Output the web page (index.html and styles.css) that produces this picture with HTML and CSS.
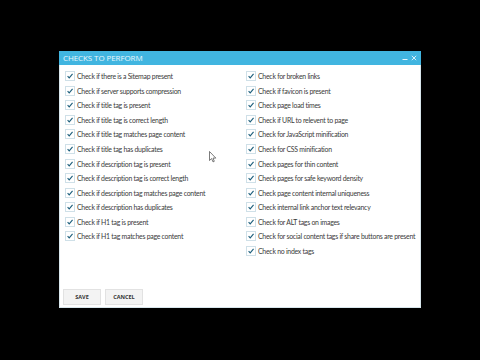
FILE: index.html
```html
<!DOCTYPE html>
<html>
<head>
<meta charset="utf-8">
<link rel="stylesheet" href="styles.css">
</head>
<body>
<div class="dialog">
  <div class="titlebar">
    <span class="title">CHECKS TO PERFORM</span>
    <span class="controls">
      <svg width="6" height="6" viewBox="0 0 6 6"><path d="M0.5 4.5H5.5" stroke="#e8f6fc" stroke-width="1"/></svg>
      <svg width="6" height="6" viewBox="0 0 6 6"><path d="M0.8 0.8L5.2 5.2M5.2 0.8L0.8 5.2" stroke="#e8f6fc" stroke-width="0.9"/></svg>
    </span>
  </div>
  <div class="content">
    <div class="col">
      <label class="row"><span class="cb"><svg viewBox="0 0 10 10"><path d="M2 5.2L4 7.3L8.2 2.3" fill="none" stroke="#1d5f7c" stroke-width="1.4"/></svg></span>Check if there is a Sitemap present</label>
      <label class="row"><span class="cb"><svg viewBox="0 0 10 10"><path d="M2 5.2L4 7.3L8.2 2.3" fill="none" stroke="#1d5f7c" stroke-width="1.4"/></svg></span>Check if server supports compression</label>
      <label class="row"><span class="cb"><svg viewBox="0 0 10 10"><path d="M2 5.2L4 7.3L8.2 2.3" fill="none" stroke="#1d5f7c" stroke-width="1.4"/></svg></span>Check if title tag is present</label>
      <label class="row"><span class="cb"><svg viewBox="0 0 10 10"><path d="M2 5.2L4 7.3L8.2 2.3" fill="none" stroke="#1d5f7c" stroke-width="1.4"/></svg></span>Check if title tag is correct length</label>
      <label class="row"><span class="cb"><svg viewBox="0 0 10 10"><path d="M2 5.2L4 7.3L8.2 2.3" fill="none" stroke="#1d5f7c" stroke-width="1.4"/></svg></span>Check if title tag matches page content</label>
      <label class="row"><span class="cb"><svg viewBox="0 0 10 10"><path d="M2 5.2L4 7.3L8.2 2.3" fill="none" stroke="#1d5f7c" stroke-width="1.4"/></svg></span>Check if title tag has duplicates</label>
      <label class="row"><span class="cb"><svg viewBox="0 0 10 10"><path d="M2 5.2L4 7.3L8.2 2.3" fill="none" stroke="#1d5f7c" stroke-width="1.4"/></svg></span>Check if description tag is present</label>
      <label class="row"><span class="cb"><svg viewBox="0 0 10 10"><path d="M2 5.2L4 7.3L8.2 2.3" fill="none" stroke="#1d5f7c" stroke-width="1.4"/></svg></span>Check if description tag is correct length</label>
      <label class="row"><span class="cb"><svg viewBox="0 0 10 10"><path d="M2 5.2L4 7.3L8.2 2.3" fill="none" stroke="#1d5f7c" stroke-width="1.4"/></svg></span>Check if description tag matches page content</label>
      <label class="row"><span class="cb"><svg viewBox="0 0 10 10"><path d="M2 5.2L4 7.3L8.2 2.3" fill="none" stroke="#1d5f7c" stroke-width="1.4"/></svg></span>Check if description has duplicates</label>
      <label class="row"><span class="cb"><svg viewBox="0 0 10 10"><path d="M2 5.2L4 7.3L8.2 2.3" fill="none" stroke="#1d5f7c" stroke-width="1.4"/></svg></span>Check if H1 tag is present</label>
      <label class="row"><span class="cb"><svg viewBox="0 0 10 10"><path d="M2 5.2L4 7.3L8.2 2.3" fill="none" stroke="#1d5f7c" stroke-width="1.4"/></svg></span>Check if H1 tag matches page content</label>
    </div>
    <div class="col">
      <label class="row"><span class="cb"><svg viewBox="0 0 10 10"><path d="M2 5.2L4 7.3L8.2 2.3" fill="none" stroke="#1d5f7c" stroke-width="1.4"/></svg></span>Check for broken links</label>
      <label class="row"><span class="cb"><svg viewBox="0 0 10 10"><path d="M2 5.2L4 7.3L8.2 2.3" fill="none" stroke="#1d5f7c" stroke-width="1.4"/></svg></span>Check if favicon is present</label>
      <label class="row"><span class="cb"><svg viewBox="0 0 10 10"><path d="M2 5.2L4 7.3L8.2 2.3" fill="none" stroke="#1d5f7c" stroke-width="1.4"/></svg></span>Check page load times</label>
      <label class="row"><span class="cb"><svg viewBox="0 0 10 10"><path d="M2 5.2L4 7.3L8.2 2.3" fill="none" stroke="#1d5f7c" stroke-width="1.4"/></svg></span>Check if URL to relevent to page</label>
      <label class="row"><span class="cb"><svg viewBox="0 0 10 10"><path d="M2 5.2L4 7.3L8.2 2.3" fill="none" stroke="#1d5f7c" stroke-width="1.4"/></svg></span>Check for JavaScript minification</label>
      <label class="row"><span class="cb"><svg viewBox="0 0 10 10"><path d="M2 5.2L4 7.3L8.2 2.3" fill="none" stroke="#1d5f7c" stroke-width="1.4"/></svg></span>Check for CSS minification</label>
      <label class="row"><span class="cb"><svg viewBox="0 0 10 10"><path d="M2 5.2L4 7.3L8.2 2.3" fill="none" stroke="#1d5f7c" stroke-width="1.4"/></svg></span>Check pages for thin content</label>
      <label class="row"><span class="cb"><svg viewBox="0 0 10 10"><path d="M2 5.2L4 7.3L8.2 2.3" fill="none" stroke="#1d5f7c" stroke-width="1.4"/></svg></span>Check pages for safe keyword density</label>
      <label class="row"><span class="cb"><svg viewBox="0 0 10 10"><path d="M2 5.2L4 7.3L8.2 2.3" fill="none" stroke="#1d5f7c" stroke-width="1.4"/></svg></span>Check page content internal uniqueness</label>
      <label class="row"><span class="cb"><svg viewBox="0 0 10 10"><path d="M2 5.2L4 7.3L8.2 2.3" fill="none" stroke="#1d5f7c" stroke-width="1.4"/></svg></span>Check internal link anchor text relevancy</label>
      <label class="row"><span class="cb"><svg viewBox="0 0 10 10"><path d="M2 5.2L4 7.3L8.2 2.3" fill="none" stroke="#1d5f7c" stroke-width="1.4"/></svg></span>Check for ALT tags on images</label>
      <label class="row"><span class="cb"><svg viewBox="0 0 10 10"><path d="M2 5.2L4 7.3L8.2 2.3" fill="none" stroke="#1d5f7c" stroke-width="1.4"/></svg></span>Check for social content tags if share buttons are present</label>
      <label class="row"><span class="cb"><svg viewBox="0 0 10 10"><path d="M2 5.2L4 7.3L8.2 2.3" fill="none" stroke="#1d5f7c" stroke-width="1.4"/></svg></span>Check no index tags</label>
    </div>
  </div>
  <div class="footer">
    <button class="btn">SAVE</button>
    <button class="btn">CANCEL</button>
  </div>
  <svg class="cursor" width="8" height="12" viewBox="0 0 8 12"><path d="M0.5 0.5V9.5L2.6 7.6L4 10.9L5.3 10.3L4 7.1H6.8Z" fill="#fff" stroke="#444" stroke-width="0.7"/></svg>
</div>
</body>
</html>
```
FILE: styles.css
```css
html, body {
  margin: 0;
  padding: 0;
  background: #000;
  width: 480px;
  height: 360px;
  overflow: hidden;
}
body {
  font-family: "Lato", "Open Sans", sans-serif;
}
.dialog {
  position: relative;
  margin: 51px 0 0 59px;
  width: 362px;
  height: 257px;
  background: #fff;
  display: flex;
  flex-direction: column;
  box-sizing: border-box;
  border: 1px solid #d8e6ec;
  border-top: none;
}
.titlebar {
  height: 14px;
  margin: 0 -1px;
  background: #41b5e0;
  display: flex;
  align-items: center;
  justify-content: space-between;
  padding: 0 4px 0 4px;
}
.title {
  color: #eaf7fc;
  font-family: "Open Sans", sans-serif;
  font-size: 8px;
  letter-spacing: -0.1px;
  line-height: 14px;
}
.controls {
  display: flex;
  gap: 3px;
  align-items: center;
}
.controls svg {
  display: block;
}
.content {
  display: grid;
  grid-template-columns: 181px 1fr;
  padding: 4px 0 0 5px;
  flex: 1;
}
.col {
  display: flex;
  flex-direction: column;
}
.row {
  display: flex;
  align-items: center;
  height: 14.55px;
  font-size: 6.9px;
  letter-spacing: -0.25px;
  color: #3a3a3a;
  white-space: nowrap;
}
.cb {
  width: 10px;
  height: 10px;
  box-sizing: border-box;
  border: 1px solid #cfe0e8;
  margin-right: 2px;
  flex: none;
  display: flex;
}
.cb svg {
  width: 8px;
  height: 8px;
}
.footer {
  display: flex;
  gap: 4px;
  padding: 0 0 2px 3px;
}
.btn {
  width: 38px;
  height: 16px;
  padding: 0;
  background: #f3f3f3;
  border: 1px solid #e2e2e2;
  font-family: "Open Sans", sans-serif;
  font-size: 5.5px;
  font-weight: 700;
  color: #333;
}
.cursor {
  position: absolute;
  left: 149px;
  top: 100px;
}
```
